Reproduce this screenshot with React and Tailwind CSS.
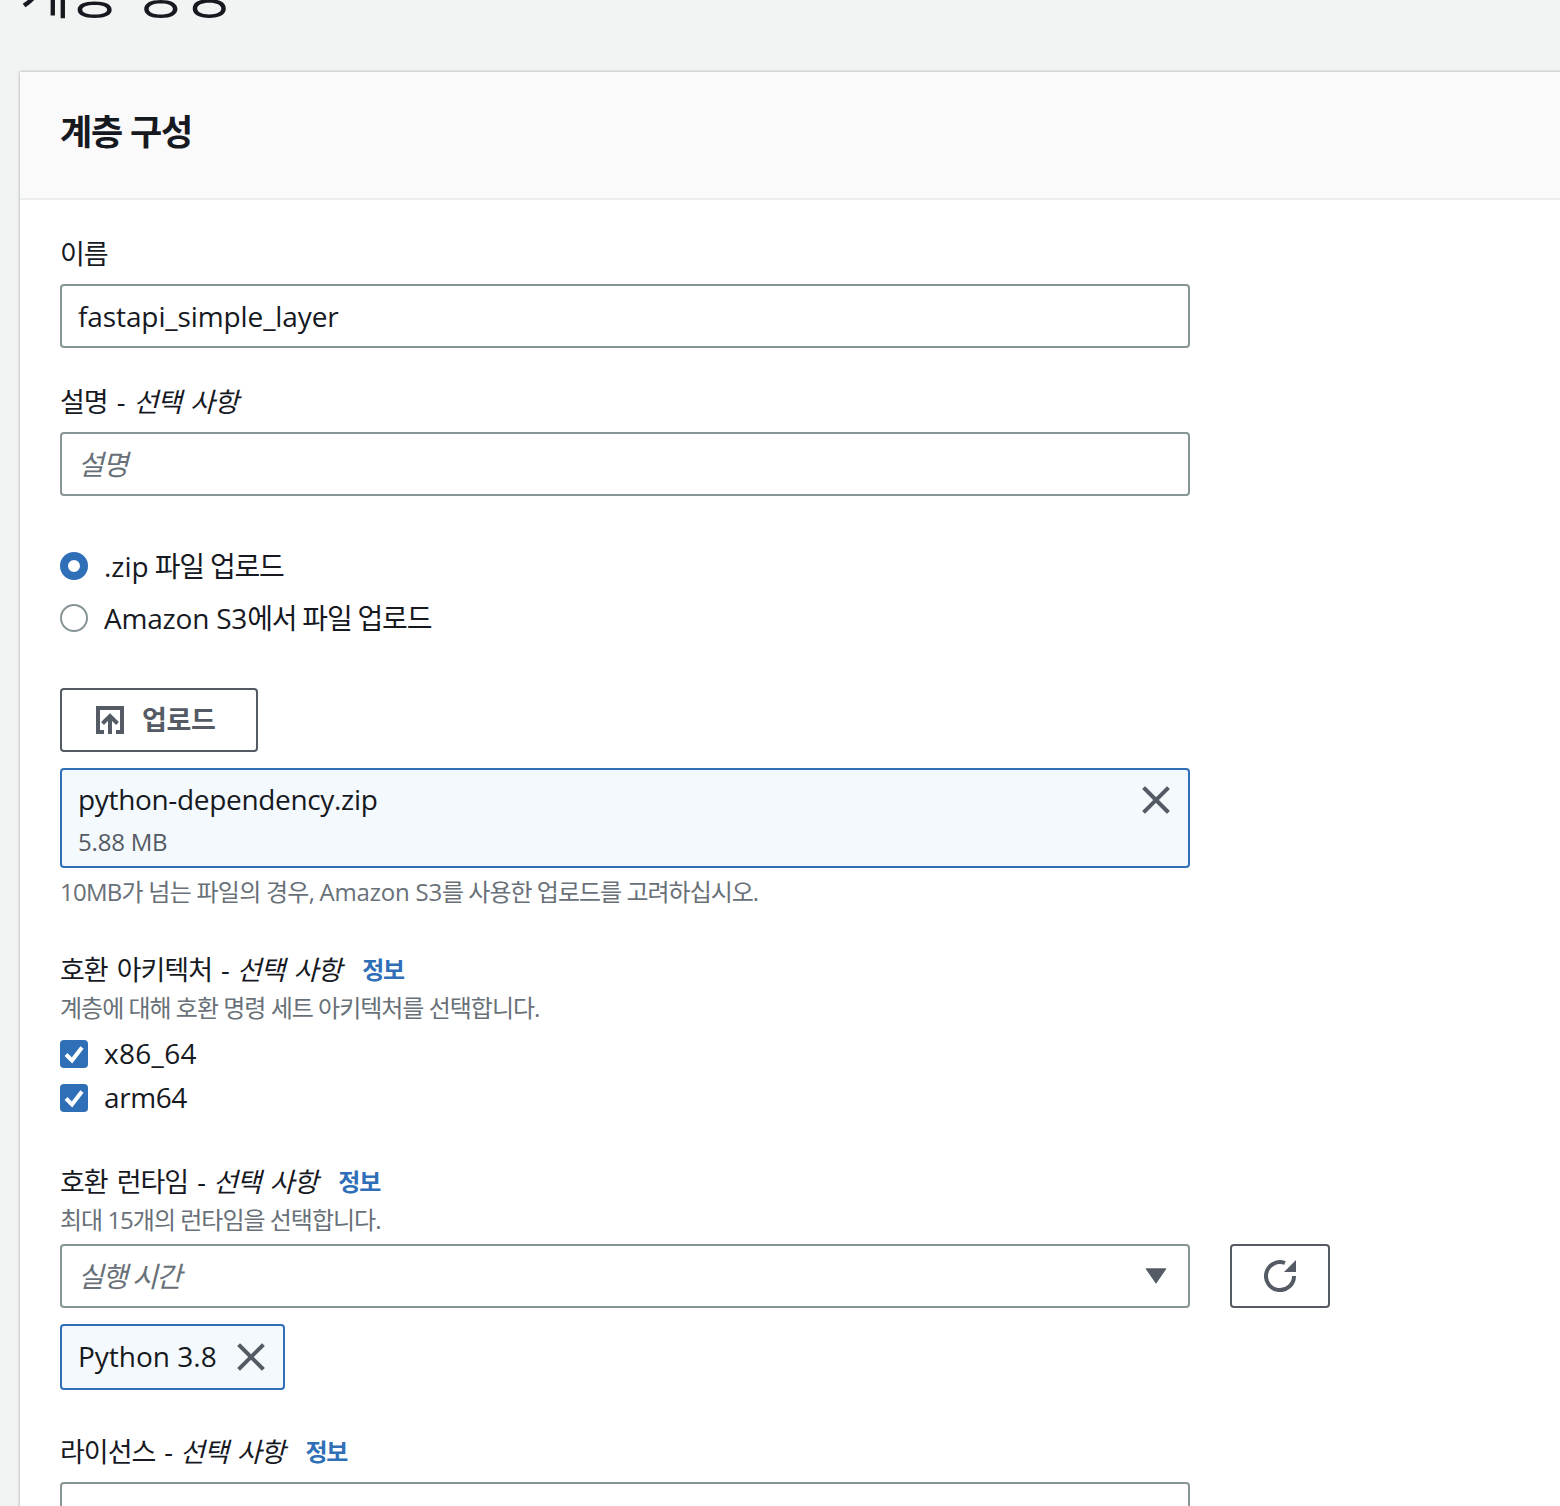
const font = { fontFamily: '"Open Sans","Noto Sans CJK KR",sans-serif' };

function Info({ children }) {
  return <span className="ml-[21px] text-[24px] font-bold text-[#2f6fb7] leading-[36px] tracking-[-1.2px]">{children}</span>;
}

function X({ className }) {
  return (
    <svg viewBox="0 0 32 32" className={className} fill="none" stroke="#545b64" strokeWidth="4" strokeLinecap="square">
      <path d="M5 5 L27 27 M27 5 L5 27" />
    </svg>
  );
}

function Check() {
  return (
    <span className="flex h-7 w-7 items-center justify-center rounded-[4px] bg-[#2f6fb7]">
      <svg viewBox="0 0 28 28" className="h-7 w-7" fill="none" stroke="#fff" strokeWidth="4">
        <path d="M6 14.5 L12 20.5 L22 7.5" />
      </svg>
    </span>
  );
}

function Field({ label, children, className = "" }) {
  return (
    <div className={className}>
      <div className="mb-[12px] text-[27px] leading-[36px] tracking-[-1px] [word-spacing:3px] text-[#16191f]">{label}</div>
      {children}
    </div>
  );
}

const labelCls = "flex items-center text-[27px] leading-[36px] tracking-[-1px] [word-spacing:3px] text-[#16191f]";
const inputCls = "flex h-16 items-center rounded-[4px] border-2 border-[#879596] bg-white px-[16px] text-[28px] text-[#16191f]";

export default function App() {
  return (
    <div style={font} className="h-[1506px] w-[1560px] overflow-hidden bg-[#f2f3f3]">
      <h1 className="mt-[-40px] h-[112px] pl-5 text-[55px] leading-[64px] text-[#16191f] tracking-[-1px]">계층 생성</h1>
      <div className="ml-5 w-[1600px] bg-white shadow-[0_0_3px_rgba(0,0,0,0.35)]">
        <div className="flex h-[128px] items-center border-b-2 border-[#eaeded] bg-[#fafafa] pl-10 pb-[6px]">
          <h2 className="text-[35px] font-bold tracking-[-1.2px] text-[#16191f]">계층 구성</h2>
        </div>
        <div className="pl-10 pt-[36px]">
          <div className="w-[1130px]">
            <Field label="이름">
              <div className={inputCls + " tracking-[-0.1px]"}>fastapi_simple_layer</div>
            </Field>
            <Field label={<>설명 - <i>선택 사항</i></>} className="mt-[36px]">
              <div className={inputCls + " italic text-[#687078] tracking-[-1px]"}>설명</div>
            </Field>

            <div className="mt-[56px] flex flex-col gap-[24px] text-[28px] leading-[28px] text-[#16191f]">
              <div className="flex items-center gap-4">
                <span className="h-7 w-7 rounded-full border-[8px] border-[#2f6fb7] bg-white" />
                <span className="tracking-[-1.2px]"><span className="tracking-normal">.zip</span> 파일 업로드</span>
              </div>
              <div className="flex items-center gap-4">
                <span className="h-7 w-7 rounded-full border-2 border-[#879596] bg-white" />
                <span className="tracking-[-1.2px]"><span className="tracking-[-0.2px]">Amazon S3</span>에서 파일 업로드</span>
              </div>
            </div>

            <button className="mt-[56px] flex h-16 w-[198px] items-center gap-[18px] rounded-[4px] border-2 border-[#545b64] bg-white pl-[34px] text-[27px] font-bold tracking-[-0.3px] text-[#545b64]">
              <svg viewBox="0 0 28 28" className="h-7 w-7" fill="none">
                <path d="M8 26 H2 V2 H26 V26 H20" stroke="#545b64" strokeWidth="4" />
                <path d="M14 28 V11 M6.5 17.5 L14 10 L21.5 17.5" stroke="#545b64" strokeWidth="4" />
              </svg>
              업로드
            </button>

            <div className="relative mt-[16px] h-[100px] rounded-[4px] border-2 border-[#2f6fb7] bg-[#f4f9fd] px-[16px] pt-[10px]">
              <div className="text-[28px] leading-[38px] tracking-[-0.33px] text-[#16191f]">python-dependency.zip</div>
              <div className="mt-[8px] text-[24px] leading-[32px] tracking-[-0.2px] text-[#545b64]">5.88 MB</div>
              <X className="absolute right-[16px] top-[14px] h-8 w-8" />
            </div>
            <div className="mt-[8px] text-[24px] leading-[32px] tracking-[-0.75px] text-[#687078]">
              10MB가 넘는 파일의 경우, <span className="tracking-[-0.2px]">Amazon S3</span><span className="tracking-[-1px]">를 사용한 업로드를 고려하십시오.</span>
            </div>

            <div className={"mt-[44px] " + labelCls}>
              호환 아키텍처 - <i className="ml-2">선택 사항</i><Info>정보</Info>
            </div>
            <div className="mt-[2px] text-[24px] leading-[36px] tracking-[-1px] text-[#687078]">
              계층에 대해 호환 명령 세트 아키텍처를 선택합니다.
            </div>
            <div className="mt-[14px] flex flex-col gap-4 text-[28px] leading-[28px] text-[#16191f]">
              <div className="flex h-7 gap-4"><Check /><span className="leading-[26px] tracking-[0.3px]">x86_64</span></div>
              <div className="flex h-7 gap-4"><Check /><span className="leading-[26px] tracking-[-0.4px]">arm64</span></div>
            </div>

            <div className={"mt-[52px] " + labelCls}>
              호환 런타임 - <i className="ml-2">선택 사항</i><Info>정보</Info>
            </div>
            <div className="mt-[2px] text-[24px] leading-[36px] tracking-[-1px] text-[#687078]">
              최대 15개의 런타임을 선택합니다.
            </div>
          </div>

          <div className="mt-[6px] flex gap-10">
            <div className={inputCls + " w-[1130px] justify-between italic text-[#687078] tracking-[-1.6px]"}>
              실행 시간
              <svg viewBox="0 0 24 20" className="mr-[5px] h-[18px] w-[22px]"><path d="M1 2 H23 L12 18 Z" fill="#545b64" stroke="#545b64" strokeLinejoin="round" /></svg>
            </div>
            <button className="flex h-16 w-[100px] items-center justify-center rounded-[4px] border-2 border-[#545b64] bg-white">
              <svg viewBox="0 0 32 32" className="h-8 w-8" fill="none">
                <path d="M30 16 A14 14 0 1 1 21 3" stroke="#545b64" strokeWidth="4" />
                <path d="M32 0 V12 H20 Z" fill="#545b64" />
              </svg>
            </button>
          </div>

          <div className="mt-4 flex h-[66px] w-[225px] items-center justify-between rounded-[4px] border-2 border-[#2f6fb7] bg-[#f4f9fd] px-[16px] text-[28px] text-[#16191f]">
            <span className="pb-[2px]">Python 3.8</span>
            <X className="h-8 w-8" />
          </div>

          <div className={"mt-[44px] " + labelCls}>
            라이선스 - <i className="ml-2">선택 사항</i><Info>정보</Info>
          </div>
          <div className="mt-[12px] h-16 w-[1130px] rounded-[4px] border-2 border-[#879596] bg-white" />
        </div>
      </div>
    </div>
  );
}
